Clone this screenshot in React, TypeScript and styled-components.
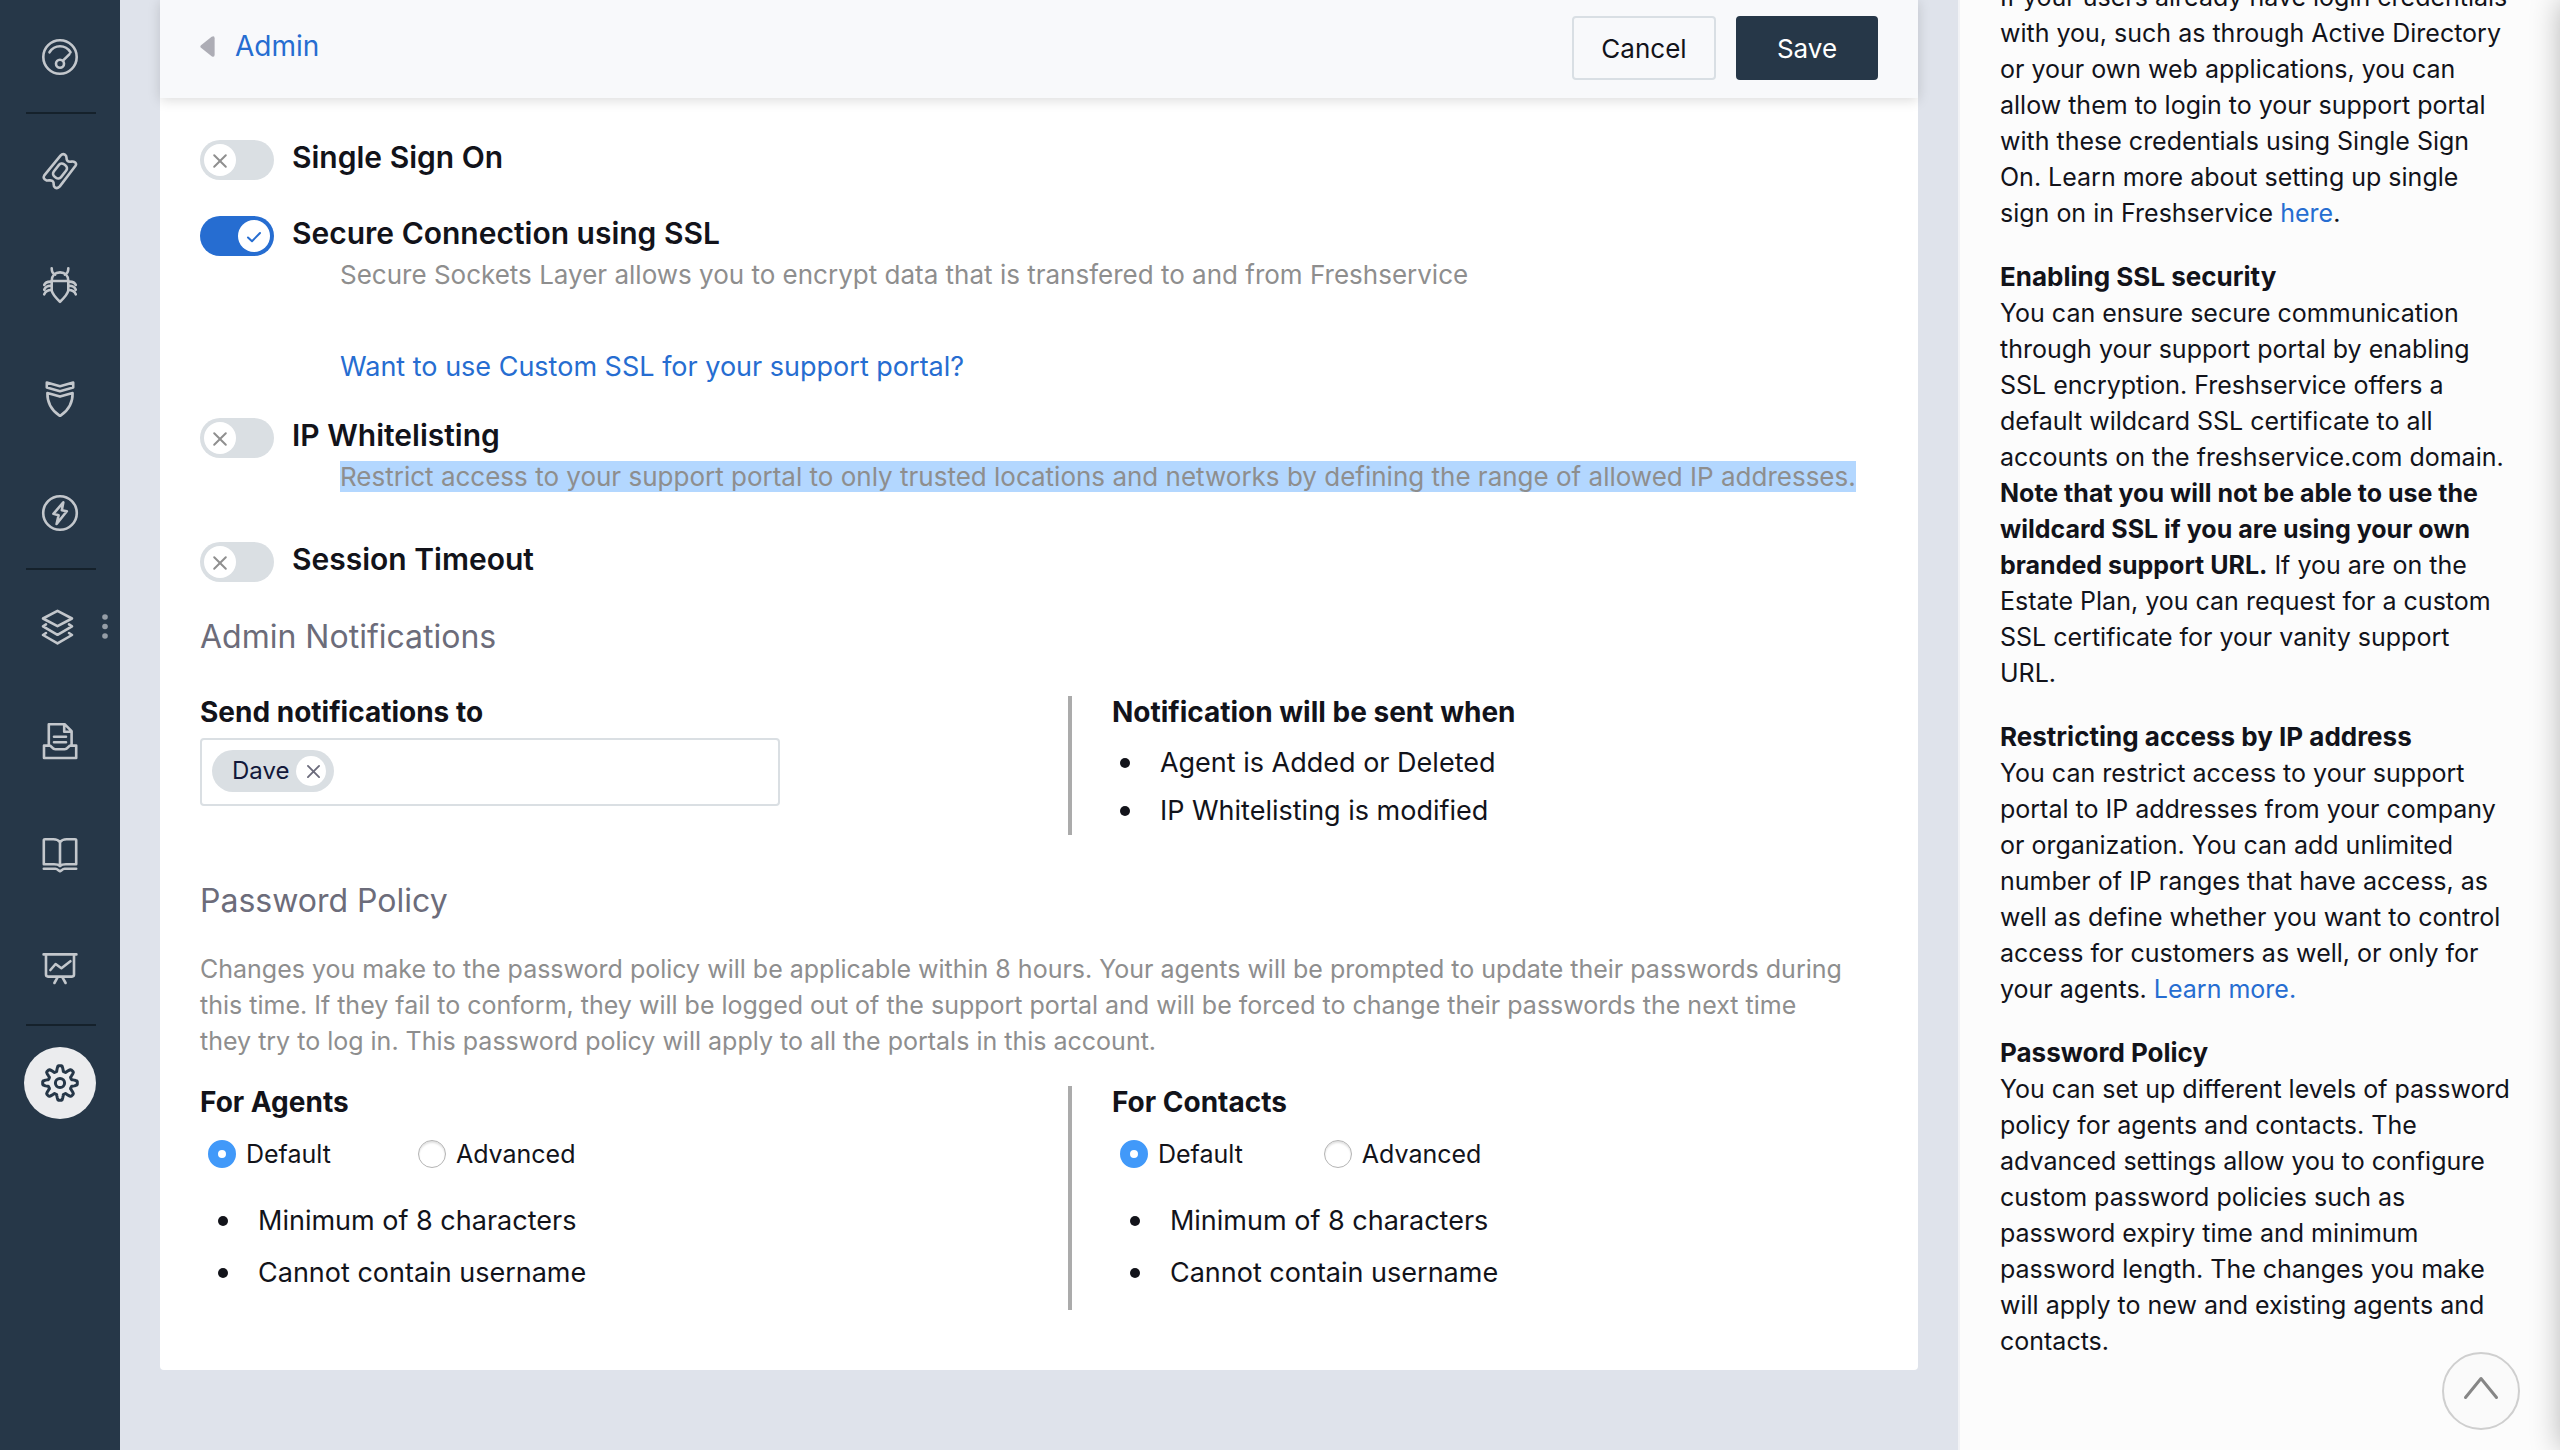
import React from 'react';
import styled, { createGlobalStyle } from 'styled-components';

const color = {
  navy: '#263748',
  canvas: '#dfe3eb',
  link: '#266dd1',
  ink: '#12131a',
  muted: '#8e8e8e',
  heading: '#6c6c7a',
  line: '#dadfe3',
};

const GlobalStyle = createGlobalStyle`
  *, *::before, *::after { box-sizing: border-box; }
  body {
    margin: 0;
    background: ${color.canvas};
    color: ${color.ink};
    font-family: Inter, "Noto Sans", "Liberation Sans", sans-serif;
    font-size: 26px;
    line-height: 36px;
  }
  h1, h2, h3, p, ul { margin: 0; padding: 0; }
  button { font: inherit; cursor: pointer; }
`;

const Page = styled.div`
  display: flex;
  height: 100vh;
  overflow: hidden;
`;

/* ---------- Sidebar ---------- */

const Sidebar = styled.nav`
  flex: none;
  width: 120px;
  background: ${color.navy};
`;

const NavItem = styled.div<{ $divider?: boolean }>`
  position: relative;
  display: flex;
  justify-content: center;
  align-items: center;
  height: 114px;
  &::after {
    content: '';
    display: ${(p) => (p.$divider ? 'block' : 'none')};
    position: absolute;
    left: 26px;
    right: 24px;
    bottom: 0;
    height: 2px;
    background: #15212b;
  }
`;

const NavLink = styled.a<{ $active?: boolean }>`
  display: flex;
  justify-content: center;
  align-items: center;
  width: 72px;
  height: 72px;
  border-radius: 50%;
  color: ${(p) => (p.$active ? color.navy : '#c3c7cc')};
  background: ${(p) => (p.$active ? '#ebecee' : 'transparent')};
`;

const MoreButton = styled.button`
  position: absolute;
  right: 8px;
  top: 40px;
  display: flex;
  padding: 4px;
  border: 0;
  background: none;
  color: #969ea7;
`;

const Icon = styled.svg`
  display: block;
  overflow: visible;
  fill: none;
  stroke: currentColor;
  stroke-linecap: round;
  stroke-linejoin: round;
`;

const gearPath = (() => {
  const points: string[] = [];
  for (let i = 0; i < 160; i += 1) {
    const a = (i / 160) * Math.PI * 2;
    const wave = Math.max(-1, Math.min(1, 1.5 * Math.cos(8 * a)));
    const r = 14.6 + 2.7 * wave;
    points.push(`${(18 + r * Math.cos(a)).toFixed(2)} ${(18 + r * Math.sin(a)).toFixed(2)}`);
  }
  return `M${points.join('L')}Z`;
})();

const icons: Record<string, React.ReactNode> = {
  Dashboard: (
    <>
      <circle cx="18" cy="18" r="16.7" />
      <path d="M7.5 13.3C12.5 5.3 23.5 5.3 28.5 13.3M21 21.7L27.3 15.3" />
      <circle cx="18" cy="24.7" r="4" />
    </>
  ),
  Tickets: (
    <>
      <path d="M2.3 22.3L18.5 2.6Q20.7.2 23.2 1.8C25.6 3.4 23.6 5.6 25.3 7.6C27.2 9.8 29.5 8 31.8 8.7Q35.3 10 33.5 12.8L17.8 33.4Q15.6 36 13 34.5C10.6 33 12.6 30.6 11 28.5C9.2 26.2 7 28 4.4 27.4Q.4 25.6 2.3 22.3Z" />
      <rect x="13.4" y="10.2" width="9.2" height="15.6" rx="3.6" transform="rotate(38 18 18)" />
    </>
  ),
  Problems: (
    <>
      <path d="M9.7 1.2C9.7 5 10.4 6.6 13.2 7.6M26.3 1.2C26.3 5 25.6 6.6 22.8 7.6M9.7 14C9.7 8.4 13 5.4 18 5.4S26.3 8.4 26.3 14ZM9.7 14V23.4C10.4 27.6 14 31 18 34.8C22 31 25.6 27.6 26.3 23.4V14" />
      <path d="M9.5 14.6C5.5 14.4 3.2 15.2 2.2 18M9.5 18.8C5.5 18.6 3.2 20 2.2 22.8M9.5 23C5.5 23 3.2 24.6 2.2 27.4M26.5 14.6C30.5 14.4 32.8 15.2 33.8 18M26.5 18.8C30.5 18.6 32.8 20 33.8 22.8M26.5 23C30.5 23 32.8 24.6 33.8 27.4" />
    </>
  ),
  Changes: (
    <>
      <path d="M4.8 1.6L18 5.2L31.2 1.6V6.6L18 10.2L4.8 6.6Z" />
      <path d="M5.4 12L18 15.6L30.6 12C30.8 21 27.6 28.4 18.8 34.4Q18 35 17.2 34.4C8.4 28.4 5.2 21 5.4 12Z" />
    </>
  ),
  Releases: (
    <>
      <circle cx="18" cy="18" r="16.8" />
      <path d="M21.3 7.4L11.4 18.8L16.6 20.2L14.6 29L24.8 16.2L19.8 15.2Z" />
    </>
  ),
  Assets: (
    <>
      <path d="M15.5 1.8L30 9.5L15.5 17.2L1 9.5Z" />
      <path d="M4 15.4L1 17.3L15.5 25.8L30 17.3L27 15.4M4 24L1 26L15.5 34.4L30 26L27 24" />
    </>
  ),
  Purchases: (
    <>
      <path d="M6.8 22V1.2H22.6L29.6 8.2V22M22.2 1.4V8.8H29.4M12 13.8H24M12 19.3H24" />
      <path d="M2 22.6H7.6C9.6 22.6 10.2 26.2 13.4 26.2H22.6C25.8 26.2 26.4 22.6 28.4 22.6H34.2V35H2Z" />
    </>
  ),
  Solutions: (
    <>
      <path d="M18 5.2C16.4 2.8 14 2.2 11.4 2.2H3Q1.8 2.2 1.8 3.4V27.2H12C14.4 27.2 16.4 27.4 18 29C19.6 27.4 21.6 27.2 24 27.2H34.2V3.4Q34.2 2.2 33 2.2H24.6C22 2.2 19.6 2.8 18 5.2ZM18 5.2V28.6" />
      <path d="M1.8 31.8H13.4C15.6 31.8 16.4 33.6 18 34.2C19.6 33.6 20.4 31.8 22.6 31.8H34.2" />
    </>
  ),
  Reports: (
    <>
      <path d="M1.6 3.4H34.4M4 3.4V23.6Q4 25.6 6 25.6H30Q32 25.6 32 23.6V3.4M15.4 26.6L12.4 32M20.6 26.6L23.6 32" />
      <path d="M8.4 19L13.6 13L19.4 17.2L28.4 10.2" />
    </>
  ),
  Admin: (
    <>
      <path d={gearPath} />
      <circle cx="18" cy="18" r="4.6" />
    </>
  ),
};

const navItems = [
  { name: 'Dashboard', divider: true },
  { name: 'Tickets' },
  { name: 'Problems' },
  { name: 'Changes' },
  { name: 'Releases', divider: true },
  { name: 'Assets', more: true },
  { name: 'Purchases' },
  { name: 'Solutions' },
  { name: 'Reports', divider: true },
  { name: 'Admin', active: true },
];

/* ---------- Main card ---------- */

const Main = styled.main`
  flex: 1;
  min-width: 0;
  padding: 0 40px;
`;

const Card = styled.div`
  background: #fff;
  border-radius: 0 0 4px 4px;
`;

const TopBar = styled.header`
  display: flex;
  align-items: center;
  justify-content: space-between;
  height: 98px;
  padding: 0 40px;
  background: #f8f9fb;
  box-shadow: 0 2px 12px rgba(0, 0, 0, 0.15);
`;

const BackLink = styled.a`
  display: flex;
  align-items: center;
  gap: 20px;
  padding-bottom: 6px;
  color: ${color.link};
  font-size: 28px;
  text-decoration: none;
`;

const Actions = styled.div`
  display: flex;
  gap: 20px;
  padding-bottom: 2px;
`;

const ActionButton = styled.button<{ $primary?: boolean }>`
  width: ${(p) => (p.$primary ? 142 : 144)}px;
  height: 64px;
  padding: 2px 0 0;
  border: 2px solid ${(p) => (p.$primary ? color.navy : '#d9dfe4')};
  border-radius: 4px;
  background: ${(p) => (p.$primary ? color.navy : 'transparent')};
  color: ${(p) => (p.$primary ? '#fff' : color.ink)};
`;

const Content = styled.div`
  padding: 40px 40px 60px;
`;

const Setting = styled.section<{ $gap: number }>`
  display: flex;
  align-items: flex-start;
  gap: 18px;
  margin-bottom: ${(p) => p.$gap}px;
`;

const Toggle = styled.span`
  position: relative;
  flex: none;
  width: 74px;
  height: 40px;
  margin-top: 2px;
`;

const ToggleInput = styled.input`
  appearance: none;
  display: block;
  width: 74px;
  height: 40px;
  margin: 0;
  border-radius: 20px;
  background: ${color.line};
  cursor: pointer;
  &::before {
    content: '';
    display: block;
    width: 32px;
    height: 32px;
    margin: 4px;
    border-radius: 50%;
    background: #fff;
    position: absolute;
  }
  &:checked { background: ${color.link}; }
  &:checked::before { right: 0; }
`;

const ToggleGlyph = styled(Icon)<{ $on: boolean }>`
  position: absolute;
  top: 14px;
  left: ${(p) => (p.$on ? 47 : 13)}px;
  color: ${(p) => (p.$on ? color.link : '#8f8f8f')};
  pointer-events: none;
`;

const SettingTitle = styled.label`
  display: block;
  font-size: 30px;
  line-height: 38px;
  font-weight: 600;
`;

const SettingBody = styled.div`
  display: flex;
  flex-direction: column;
  align-items: flex-start;
  gap: 56px;
  padding: 5px 0 0 48px;
`;

const Muted = styled.p<{ $small?: boolean }>`
  color: ${color.muted};
  font-size: ${(p) => (p.$small ? 25 : 26)}px;
`;

const Selected = styled.mark`
  background: #b3d7ff;
  color: inherit;
`;

const BigLink = styled.a`
  color: ${color.link};
  font-size: 27px;
  text-decoration: none;
`;

const SectionTitle = styled.h2<{ $top: number; $bottom: number }>`
  margin: ${(p) => p.$top}px 0 ${(p) => p.$bottom}px;
  color: ${color.heading};
  font-size: 32px;
  line-height: 44px;
  font-weight: 400;
`;

const Columns = styled.div<{ $top?: number }>`
  display: grid;
  grid-template-columns: 15fr 14fr;
  margin-top: ${(p) => p.$top ?? 0}px;
`;

const DividedColumn = styled.div<{ $bottom?: number }>`
  padding: 0 0 ${(p) => p.$bottom ?? 0}px 40px;
  border-left: 4px solid #ababab;
`;

const fieldTitle = `
  display: block;
  font-size: 28px;
  line-height: 32px;
  font-weight: 700;
`;
const FieldLabel = styled.label`${fieldTitle}`;
const FieldTitle = styled.h3`${fieldTitle}`;

const TagBox = styled.div`
  display: flex;
  align-items: center;
  width: 580px;
  max-width: 90%;
  height: 68px;
  margin-top: 10px;
  padding: 0 10px 2px;
  border: 2px solid ${color.line};
  border-radius: 4px;
`;

const Tag = styled.span`
  display: flex;
  flex: none;
  align-items: center;
  gap: 7px;
  height: 42px;
  padding: 0 8px 0 20px;
  border-radius: 21px;
  background: ${color.line};
  color: #12183a;
  font-size: 24px;
`;

const TagRemove = styled.button`
  display: flex;
  align-items: center;
  justify-content: center;
  width: 30px;
  height: 30px;
  padding: 0 0 0 4px;
  border: 0;
  border-radius: 50%;
  background: #fff;
  color: #6b6b7b;
`;

const TagInput = styled.input`
  flex: 1;
  min-width: 0;
  height: 40px;
  border: 0;
  outline: 0;
  background: none;
  font: inherit;
`;

const Bullets = styled.ul<{ $top: number; $row: number; $indent?: number }>`
  margin-top: ${(p) => p.$top}px;
  padding-left: ${(p) => p.$indent ?? 0}px;
  list-style: none;
  font-size: 27px;
  line-height: ${(p) => p.$row}px;
  li {
    display: flex;
    align-items: center;
  }
  li::before {
    content: '';
    width: 10px;
    height: 10px;
    margin: 0 30px 0 8px;
    border-radius: 50%;
    background: ${color.ink};
  }
`;

const RadioRow = styled.div<{ $gap: number }>`
  display: flex;
  gap: ${(p) => p.$gap}px;
  margin-top: 18px;
  padding-left: 8px;
`;

const RadioLabel = styled.label`
  display: flex;
  align-items: center;
  gap: 10px;
  font-size: 25px;
`;

const Radio = styled.input`
  appearance: none;
  width: 28px;
  height: 28px;
  margin: 0;
  border: 1px solid #b4b4b4;
  border-radius: 50%;
  background: #fff;
  box-shadow: inset 0 2px 2px rgba(0, 0, 0, 0.12);
  &:checked {
    border: 10px solid #4199f9;
    box-shadow: none;
  }
`;

/* ---------- Help panel ---------- */

const HelpPanel = styled.aside`
  position: relative;
  flex: none;
  width: 602px;
  overflow: hidden;
  padding: 0 48px 0 40px;
  border-left: 2px solid #f1f2f5;
  background: #fcfcfc;
  &::after {
    content: '';
    position: absolute;
    top: 0;
    bottom: 0;
    left: 100%;
    width: 40px;
    box-shadow: 0 0 30px rgba(0, 0, 0, 0.28);
  }
`;

const HelpBody = styled.div`
  display: flex;
  flex-direction: column;
  gap: 28px;
  margin-top: -21px;
  font-size: 25px;
`;

const HelpTitle = styled.h3`
  font-size: 26px;
  line-height: 36px;
  font-weight: 700;
`;

const Strong = styled.strong`
  font-weight: 700;
`;

const HelpLink = styled.a`
  color: ${color.link};
  text-decoration: none;
`;

const ScrollTop = styled.button`
  position: fixed;
  right: 40px;
  bottom: 20px;
  display: flex;
  align-items: center;
  justify-content: center;
  width: 78px;
  height: 78px;
  padding: 0 0 6px;
  border: 2px solid #cfcfcf;
  border-radius: 50%;
  background: #fafafa;
  color: #868686;
`;

function ToggleSwitch({ id, on }: { id: string; on: boolean }) {
  return (
    <Toggle>
      <ToggleInput id={id} type="checkbox" role="switch" defaultChecked={on} />
      <ToggleGlyph $on={on} width="14" height="14" viewBox="0 0 14 14" strokeWidth="2" aria-hidden="true">
        {on ? <path d="M1 7.5L5 11.2L13 3" /> : <path d="M1.2 1.2L12.8 12.8M12.8 1.2L1.2 12.8" />}
      </ToggleGlyph>
    </Toggle>
  );
}

function SettingRow(props: { id: string; title: string; on?: boolean; gap: number; children?: React.ReactNode }) {
  return (
    <Setting $gap={props.gap}>
      <ToggleSwitch id={props.id} on={!!props.on} />
      <div>
        <SettingTitle htmlFor={props.id}>{props.title}</SettingTitle>
        {props.children}
      </div>
    </Setting>
  );
}

function PolicyOptions({ name, gap }: { name: string; gap: number }) {
  return (
    <>
      <RadioRow $gap={gap}>
        <RadioLabel>
          <Radio type="radio" name={name} defaultChecked />
          Default
        </RadioLabel>
        <RadioLabel>
          <Radio type="radio" name={name} />
          Advanced
        </RadioLabel>
      </RadioRow>
      <Bullets $top={23} $row={52} $indent={10}>
        <li>Minimum of 8 characters</li>
        <li>Cannot contain username</li>
      </Bullets>
    </>
  );
}

export default function App() {
  return (
    <Page>
      <GlobalStyle />
      <Sidebar aria-label="Main">
        {navItems.map((item) => (
          <NavItem key={item.name} $divider={item.divider}>
            <NavLink href="#" $active={item.active} aria-label={item.name}>
              <Icon
                width="36"
                height="36"
                viewBox="0 0 36 36"
                strokeWidth={item.active ? 3 : 2.6}
                aria-hidden="true"
              >
                {icons[item.name]}
              </Icon>
            </NavLink>
            {item.more && (
              <MoreButton type="button" aria-label="More assets">
                <Icon width="6" height="25" viewBox="0 0 6 25" aria-hidden="true">
                  <g fill="currentColor" stroke="none">
                    <circle cx="3" cy="3" r="2.8" />
                    <circle cx="3" cy="12.5" r="2.8" />
                    <circle cx="3" cy="22" r="2.8" />
                  </g>
                </Icon>
              </MoreButton>
            )}
          </NavItem>
        ))}
      </Sidebar>

      <Main>
        <Card>
          <TopBar>
            <BackLink href="#">
              <svg width="15" height="21" viewBox="0 0 15 21" aria-hidden="true">
                <path
                  d="M1 9.2L11.6.8Q14.6-.8 14.6 2.2V18.8Q14.6 21.8 11.6 20.2L1 11.8Q-.4 10.5 1 9.2Z"
                  fill="#adadb5"
                />
              </svg>
              Admin
            </BackLink>
            <Actions>
              <ActionButton type="button">Cancel</ActionButton>
              <ActionButton type="submit" $primary>
                Save
              </ActionButton>
            </Actions>
          </TopBar>

          <Content>
            <SettingRow id="sso" title="Single Sign On" gap={34} />
            <SettingRow id="ssl" title="Secure Connection using SSL" on gap={31}>
              <SettingBody>
                <Muted>Secure Sockets Layer allows you to encrypt data that is transfered to and from Freshservice</Muted>
                <BigLink href="#">Want to use Custom SSL for your support portal?</BigLink>
              </SettingBody>
            </SettingRow>
            <SettingRow id="ip" title="IP Whitelisting" gap={45}>
              <SettingBody>
                <Muted>
                  <Selected>
                    Restrict access to your support portal to only trusted locations and networks by defining the range
                    of allowed IP addresses.
                  </Selected>
                </Muted>
              </SettingBody>
            </SettingRow>
            <SettingRow id="timeout" title="Session Timeout" gap={0} />

            <SectionTitle $top={33} $bottom={37}>
              Admin Notifications
            </SectionTitle>
            <Columns>
              <div>
                <FieldLabel htmlFor="recipients">Send notifications to</FieldLabel>
                <TagBox>
                  <Tag>
                    Dave
                    <TagRemove type="button" aria-label="Remove Dave">
                      <Icon width="13" height="13" viewBox="0 0 14 14" strokeWidth="2" aria-hidden="true">
                        <path d="M1 1L13 13M13 1L1 13" />
                      </Icon>
                    </TagRemove>
                  </Tag>
                  <TagInput id="recipients" type="text" />
                </TagBox>
              </div>
              <DividedColumn>
                <FieldTitle>Notification will be sent when</FieldTitle>
                <Bullets $top={11} $row={48}>
                  <li>Agent is Added or Deleted</li>
                  <li>IP Whitelisting is modified</li>
                </Bullets>
              </DividedColumn>
            </Columns>

            <SectionTitle $top={44} $bottom={28}>
              Password Policy
            </SectionTitle>
            <Muted $small>
              Changes you make to the password policy will be applicable within 8 hours. Your agents will be prompted to
              update their passwords during
              <br />
              this time. If they fail to conform, they will be logged out of the support portal and will be forced to
              change their passwords the next time
              <br />
              they try to log in. This password policy will apply to all the portals in this account.
            </Muted>
            <Columns $top={27}>
              <div>
                <FieldTitle>For Agents</FieldTitle>
                <PolicyOptions name="agent-policy" gap={87} />
              </div>
              <DividedColumn $bottom={11}>
                <FieldTitle>For Contacts</FieldTitle>
                <PolicyOptions name="contact-policy" gap={81} />
              </DividedColumn>
            </Columns>
          </Content>
        </Card>
      </Main>

      <HelpPanel>
        <HelpBody>
          <p>
            If your users already have login credentials with you, such as through Active Directory or your own web
            applications, you can allow them to login to your support portal with these credentials using Single Sign
            <br />
            On. Learn more about setting up single
            <br />
            sign on in Freshservice <HelpLink href="#">here</HelpLink>.
          </p>
          <div>
            <HelpTitle>Enabling SSL security</HelpTitle>
            <p>
              You can ensure secure communication through your support portal by enabling SSL encryption. Freshservice
              offers a default wildcard SSL certificate to all accounts on the freshservice.com domain.{' '}
              <Strong>
                Note that you will not be able to use the wildcard SSL if you are using your own branded support URL.
              </Strong>{' '}
              If you are on the Estate Plan, you can request for a custom SSL certificate for your vanity support
              <br />
              URL.
            </p>
          </div>
          <div>
            <HelpTitle>Restricting access by IP address</HelpTitle>
            <p>
              You can restrict access to your support portal to IP addresses from your company or organization. You can
              add unlimited number of IP ranges that have access, as well as define whether you want to control access
              for customers as well, or only for your agents. <HelpLink href="#">Learn more.</HelpLink>
            </p>
          </div>
          <div>
            <HelpTitle>Password Policy</HelpTitle>
            <p>
              You can set up different levels of password policy for agents and contacts. The advanced settings allow
              you to configure custom password policies such as password expiry time and minimum password length. The
              changes you make will apply to new and existing agents and contacts.
            </p>
          </div>
        </HelpBody>
        <ScrollTop type="button" aria-label="Scroll to top">
          <Icon width="34" height="22" viewBox="0 0 34 22" strokeWidth="3" aria-hidden="true">
            <path d="M1.5 20.5L17 1.5L32.5 20.5" />
          </Icon>
        </ScrollTop>
      </HelpPanel>
    </Page>
  );
}
